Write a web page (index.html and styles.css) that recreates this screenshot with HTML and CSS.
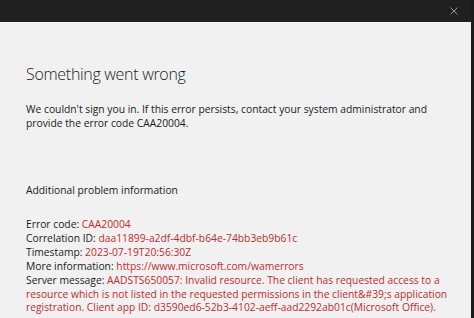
FILE: index.html
```html
<!DOCTYPE html>
<html lang="en">
<head>
    <meta charset="UTF-8">
    <meta name="viewport" content="width=device-width, initial-scale=1.0">
    <title>Something went wrong</title>
    <link rel="stylesheet" href="styles.css">
</head>
<body>
    <div class="frame">
        <div class="titlebar">
            <svg class="close" width="8" height="8" viewBox="0 0 8 8">
                <path d="M0.5 0.5 L7.5 7.5 M7.5 0.5 L0.5 7.5" stroke="#9a9a9a" stroke-width="1"/>
            </svg>
        </div>
        <div class="dialog">
            <h1 class="heading">Something went wrong</h1>
            <p class="message">We couldn't sign you in. If this error persists, contact your system administrator and provide the error code CAA20004.</p>

            <h2 class="subheading">Additional problem information</h2>
            <div class="details">
                <div>Error code: <span class="value">CAA20004</span></div>
                <div>Correlation ID: <span class="value">daa11899-a2df-4dbf-b64e-74bb3eb9b61c</span></div>
                <div>Timestamp: <span class="value">2023-07-19T20:56:30Z</span></div>
                <div>More information: <span class="value">https://www.microsoft.com/wamerrors</span></div>
                <div>Server message: <span class="value">AADSTS650057: Invalid resource. The client has requested access to a<br>resource which is not listed in the requested permissions in the client&amp;#39;s application<br>registration. Client app ID: d3590ed6-52b3-4102-aeff-aad2292ab01c(Microsoft Office).</span></div>
            </div>
        </div>
    </div>
</body>
</html>
```

FILE: styles.css
```css
html, body {
    margin: 0;
    padding: 0;
    height: 318px;
    overflow: hidden;
}
body {
    background-color: #1b1b1b;
    font-family: "Open Sans", "Noto Sans", sans-serif;
}
.frame {
    width: 471px;
    height: 318px;
    display: flex;
    flex-direction: column;
    overflow: hidden;
}
.titlebar {
    flex: none;
    height: 22px;
    background-color: #202020;
    border-bottom: 1px solid #f8f8f8;
    display: flex;
    justify-content: flex-end;
    align-items: center;
    padding-right: 13px;
}
.close {
    display: block;
}
.dialog {
    flex: 1;
    min-height: 0;
    overflow: hidden;
    background-color: #f1f1f1;
    padding: 39px 4px 0 26px;
    color: #1a1a1a;
}
.heading {
    margin: 0;
    font-size: 16px;
    font-weight: 300;
    letter-spacing: -0.3px;
    line-height: 24px;
}
.message {
    margin: 16px 0 0 0;
    max-width: 420px;
    font-size: 10.3px;
    line-height: 14px;
}
.subheading {
    margin: 53px 0 0 0;
    font-size: 10.3px;
    font-weight: 400;
    line-height: 14px;
}
.details {
    margin-top: 21px;
    font-size: 10.3px;
    line-height: 13.9px;
}
.value {
    color: #c42b2b;
}
```
